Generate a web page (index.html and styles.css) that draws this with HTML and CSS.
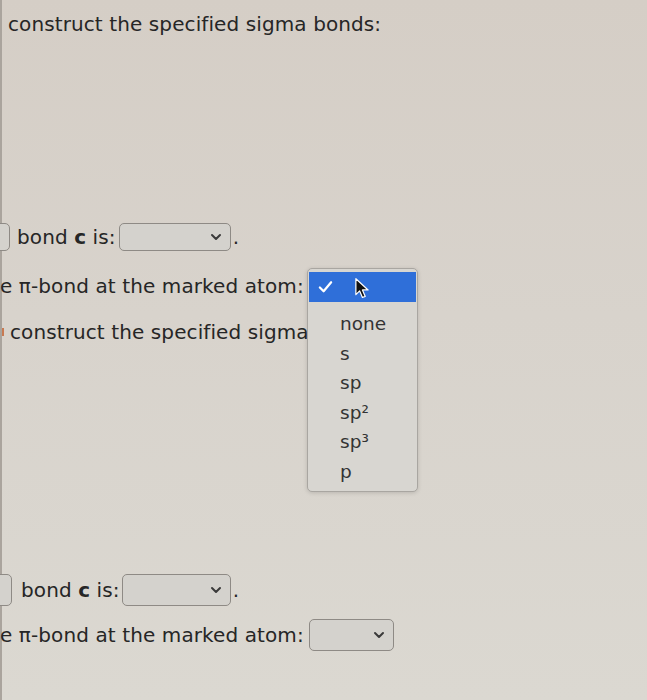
FILE: index.html
```html
<!DOCTYPE html>
<html>
<head>
<meta charset="utf-8">
<link rel="stylesheet" href="styles.css">
</head>
<body>
<div class="page">
  <div class="row r1"><span class="txt">construct the specified sigma bonds:</span></div>

  <div class="row r2">
    <span class="sel partial"></span>
    <span class="txt lbl">bond <b>c</b> is:</span>
    <span class="sel w1"><svg class="chev" viewBox="0 0 12 8"><path d="M2 2 L6 6 L10 2" /></svg></span>
    <span class="txt dot">.</span>
  </div>

  <div class="row r3">
    <span class="txt">e π-bond at the marked atom:</span>
  </div>

  <div class="row r4">
    <span class="mark"></span>
    <span class="txt">construct the specified sigma</span>
  </div>

  <div class="row r5">
    <span class="sel partial p2"><svg class="chev small" viewBox="0 0 12 8"><path d="M2 2 L6 6 L10 2" /></svg></span>
    <span class="txt lbl2">bond <b>c</b> is:</span>
    <span class="sel w1"><svg class="chev" viewBox="0 0 12 8"><path d="M2 2 L6 6 L10 2" /></svg></span>
    <span class="txt dot">.</span>
  </div>

  <div class="row r6">
    <span class="txt">e π-bond at the marked atom:</span>
    <span class="sel w2"><svg class="chev" viewBox="0 0 12 8"><path d="M2 2 L6 6 L10 2" /></svg></span>
  </div>

  <div class="menu">
    <div class="item selected">
      <svg class="check" viewBox="0 0 16 14"><path d="M2 7.5 L6 11.5 L14 2" /></svg>
      <svg class="cursor" viewBox="0 0 16 24"><path d="M2 1 L2 18 L6 14 L9 21 L12 20 L9 13 L15 13 Z" /></svg>
    </div>
    <div class="item">none</div>
    <div class="item">s</div>
    <div class="item">sp</div>
    <div class="item">sp²</div>
    <div class="item">sp³</div>
    <div class="item">p</div>
  </div>
</div>
</body>
</html>
```

FILE: styles.css
```css
html, body {
  margin: 0;
  padding: 0;
}
body {
  width: 647px;
  height: 700px;
  overflow: hidden;
  background: linear-gradient(180deg, #d5cec6 0%, #d8d3cc 45%, #dbd8d1 100%);
  font-family: "DejaVu Sans", Verdana, sans-serif;
  color: #262626;
}
.page {
  position: relative;
  height: 700px;
  border-left: 2px solid #aaa49d;
  box-sizing: border-box;
  display: flex;
  flex-direction: column;
}
.row {
  height: 32px;
  display: flex;
  align-items: center;
  white-space: nowrap;
}
.txt {
  font-size: 20px;
  letter-spacing: 0.1px;
}
.txt b {
  font-weight: bold;
}
.r1 { margin-top: 8px; padding-left: 6px; }
.r2 { margin-top: 181px; }
.r3 { margin-top: 17px; }
.r4 { margin-top: 14px; }
.r5 { margin-top: 226px; }
.r6 { margin-top: 13px; }

.sel {
  height: 28px;
  box-sizing: border-box;
  border: 1.5px solid #8e8a85;
  border-radius: 5px;
  background: #d4d2cd;
  display: flex;
  align-items: center;
  justify-content: flex-end;
  padding-right: 8px;
}
.partial {
  width: 30px;
  margin-left: -22px;
}
.p2 {
  width: 36px;
  margin-left: -26px;
  padding-right: 2px;
  justify-content: flex-start;
  height: 32px;
}
.lbl { margin-left: 7px; }
.lbl2 { margin-left: 9px; }
.r2 .w1 { margin-left: 3px; width: 112px; }
.r5 .w1 { margin-left: 2px; width: 109px; height: 32px; }
.w2 { margin-left: 5px; width: 85px; height: 32px; }
.dot { margin-left: 2px; }
.r3 .txt, .r6 .txt { margin-left: -2px; }
.r4 .txt { margin-left: 6px; }
.mark {
  width: 2px;
  height: 8px;
  background: #c87a52;
}

.chev {
  width: 12px;
  height: 8px;
}
.chev path {
  fill: none;
  stroke: #3a3a3a;
  stroke-width: 2;
  stroke-linecap: round;
  stroke-linejoin: round;
}
.chev.small { width: 9px; }

.menu {
  position: absolute;
  left: 305px;
  top: 268px;
  width: 111px;
  height: 224px;
  box-sizing: border-box;
  background: #d8d6d1;
  border: 1px solid #a9a6a1;
  border-radius: 5px;
  box-shadow: 0 1px 4px rgba(0,0,0,0.15);
  padding-top: 3px;
}
.item {
  height: 29.5px;
  font-size: 18.5px;
  line-height: 29.5px;
  padding-left: 32px;
  color: #333;
}
.item.selected {
  height: 30px;
  margin: 0 1px 7px 1px;
  background: #2f6fd9;
  position: relative;
  padding-left: 0;
}
.check {
  position: absolute;
  left: 9px;
  top: 8px;
  width: 15px;
  height: 14px;
}
.check path {
  fill: none;
  stroke: #ffffff;
  stroke-width: 2.4;
  stroke-linecap: round;
  stroke-linejoin: round;
}
.cursor {
  position: absolute;
  left: 45px;
  top: 5px;
  width: 15px;
  height: 24px;
}
.cursor path {
  fill: #111;
  stroke: #fff;
  stroke-width: 1.3;
  stroke-linejoin: round;
}
```
